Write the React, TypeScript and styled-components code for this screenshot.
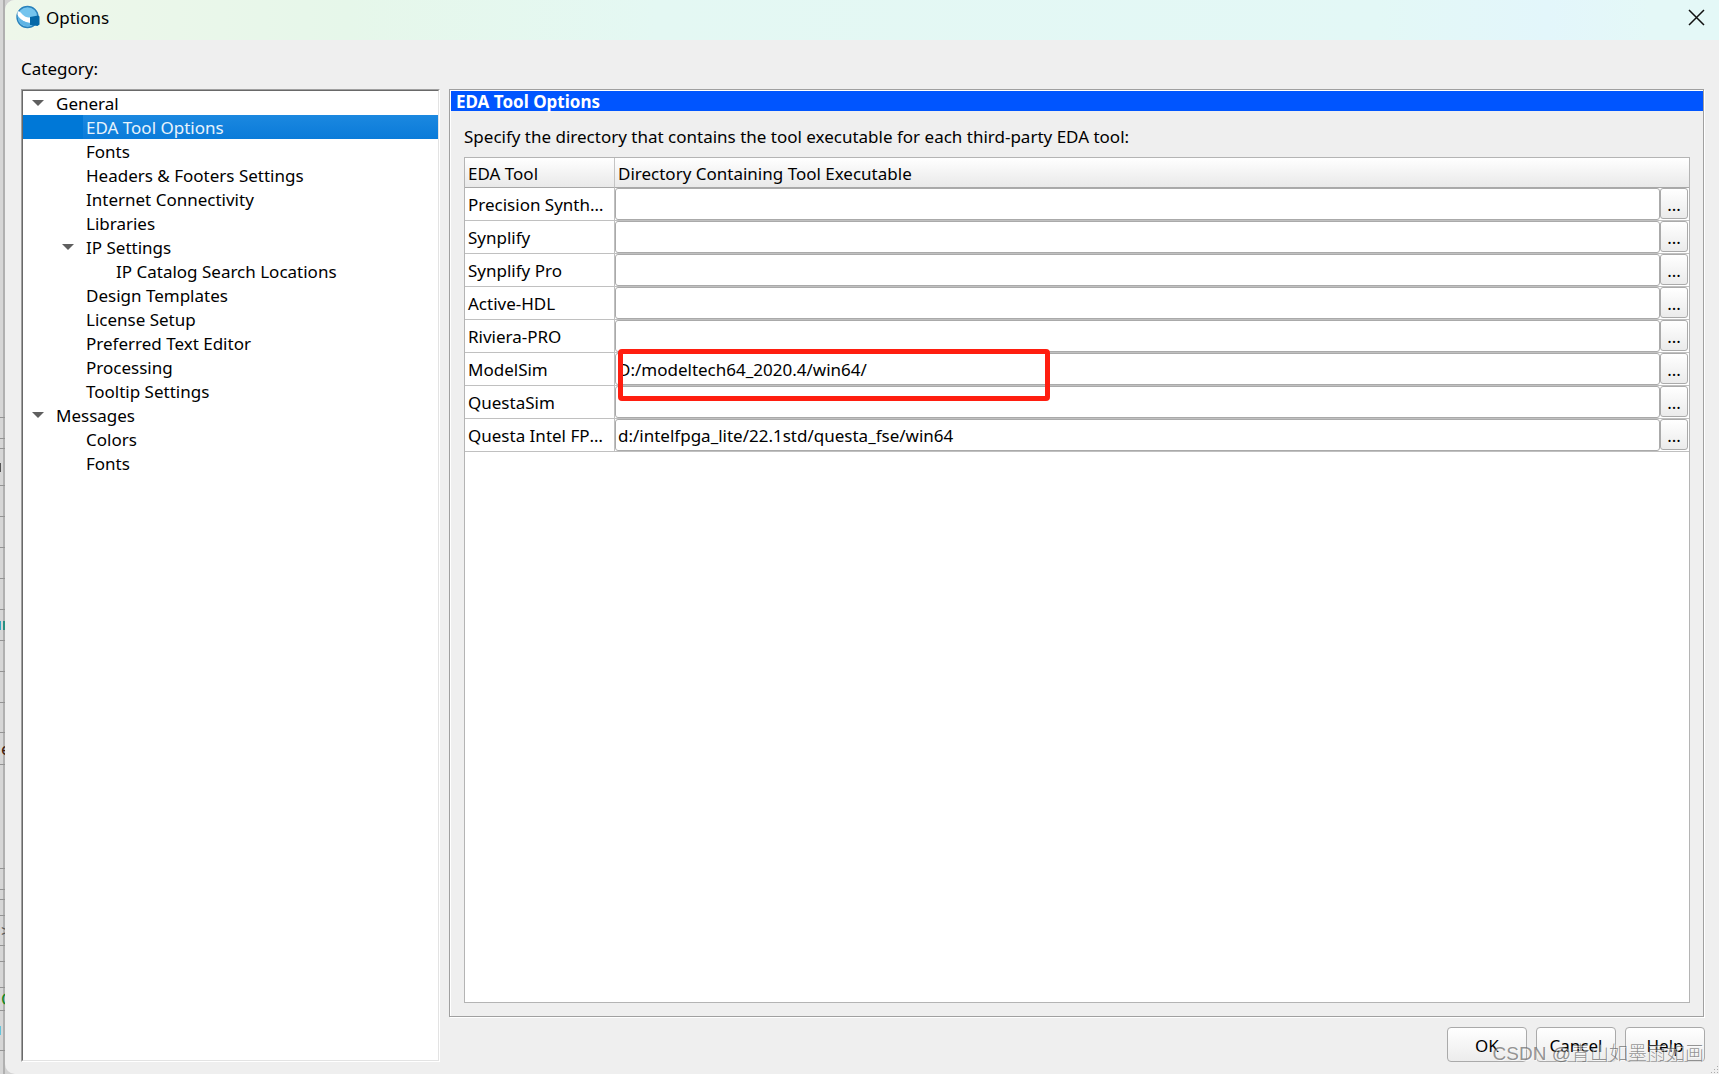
import React, { useState } from "react";
import styled, { createGlobalStyle, css } from "styled-components";

const GlobalStyle = createGlobalStyle`
  *, *::before, *::after { box-sizing: border-box; }
  body {
    margin: 0;
    background: #d2d2d2;
    color: #000;
    font: 17px/24px "Noto Sans", "Noto Sans CJK SC", sans-serif;
  }
  button, input { font: inherit; color: inherit; }
`;

const Screen = styled.div`
  position: relative;
  display: flex;
  min-height: 100vh;
  overflow: hidden;
`;

const Behind = styled.div`
  flex: none;
  width: 5px;
  height: 100vh;
  overflow: hidden;
  background: linear-gradient(90deg, #d6d6d6 0 60%, #b0b0b0 60%);
`;

const Slice = styled.div<{ $height: number; $tone?: string }>`
  display: flex;
  align-items: center;
  height: ${(p) => p.$height}px;
  overflow: hidden;
  border-bottom: 1px solid #949494;
  color: ${(p) => p.$tone ?? "#444"};
`;

const SliceText = styled.span`
  padding-left: 1px;
`;

const Chip = styled.span<{ $color: string; $width: number }>`
  width: ${(p) => p.$width}px;
  height: 9px;
  background: ${(p) => p.$color};
`;

const Dialog = styled.main`
  flex: 1;
  display: flex;
  flex-direction: column;
  min-width: 0;
  min-height: 100vh;
  background: #efefef;
  border-radius: 10px 0 0 10px;
  overflow: hidden;
`;

const TitleBar = styled.header`
  display: flex;
  align-items: center;
  height: 40px;
  padding: 0 14px 6px 11px;
  background: linear-gradient(90deg, #eef7ea 0%, #e6f7ea 20%, #e4f8f3 38%, #e3f8f6 80%, #e3f6fb 90%, #e4f8f7 96%);
`;

const Title = styled.h1`
  flex: 1;
  margin: 0;
  padding: 1px 0 0 6px;
  font-size: 17px;
  font-weight: 400;
`;

const CloseButton = styled.button`
  display: flex;
  padding: 0;
  border: 0;
  background: none;
`;

const Body = styled.div`
  flex: 1;
  display: grid;
  grid-template-columns: 419px minmax(0, 1fr);
  grid-template-rows: auto minmax(0, 1fr) auto;
  column-gap: 9px;
  padding: 17px 14px 12px 16px;
`;

const CategoryLabel = styled.h2`
  grid-column: 1 / -1;
  margin: 0 0 8px;
  font-size: 17px;
  font-weight: 400;
`;

const TreeFrame = styled.nav`
  grid-row: 2 / 4;
  border: 1px solid;
  border-color: #a0a0a0 #fff #fff #a0a0a0;
`;

const TreeInner = styled.div`
  height: 100%;
  background: #fff;
  border: 1px solid;
  border-color: #696969 #e3e3e3 #e3e3e3 #696969;
`;

const TreeList = styled.ul`
  margin: 0;
  padding: 0;
  list-style: none;
`;

const TreeItem = styled.button<{ $level: number; $selected: boolean }>`
  display: flex;
  align-items: stretch;
  width: 100%;
  height: 24px;
  padding: 0 0 0 ${(p) => p.$level * 30}px;
  border: 0;
  background: none;
  text-align: left;
  white-space: nowrap;
  ${(p) =>
    p.$selected &&
    css`
      background: #0078d7;
      color: #e8f3fc;
    `}
`;

const Branch = styled.span`
  display: flex;
  align-items: center;
  flex: none;
  width: 30px;
  padding-left: 9px;
`;

const TreeText = styled.span<{ $selected: boolean }>`
  flex: 1;
  padding: 1px 0 0 3px;
  line-height: 23px;
  padding-top: 1px;
  background: ${(p) => (p.$selected ? "linear-gradient(#1b88e0, #0a7bd9)" : "none")};
`;

const Panel = styled.section`
  display: flex;
  flex-direction: column;
  border: 1px solid #a0a0a0;
  box-shadow: 1px 1px 0 #fff, inset 1px 1px 0 #fff;
  padding: 1px 0 13px 1px;
  margin-right: 1px;
`;

const PanelTitle = styled.h2`
  margin: 0;
  padding: 1px 0 0 5px;
  background: #0055ff;
  color: #fff;
  font-size: 17px;
  line-height: 19px;
  font-weight: 700;
`;

const Description = styled.p`
  margin: 0;
  padding: 14px 13px 8px;
`;

const TableFrame = styled.div`
  flex: 1;
  margin: 0 13px;
  border: 1px solid #b4b4b4;
  background: #fff;
`;

const Table = styled.table`
  width: 100%;
  border-collapse: separate;
  border-spacing: 0;
  table-layout: fixed;
`;

const HeadCell = styled.th<{ $width?: number }>`
  width: ${(p) => (p.$width ? `${p.$width}px` : "auto")};
  height: 30px;
  padding: 2px 3px 0;
  border-right: 1px solid #c4c4c4;
  border-bottom: 1px solid #a8a8a8;
  background: linear-gradient(#fff, #e9e9e9);
  font-weight: 400;
  text-align: left;
  &:last-child { border-right: 0; }
`;

const NameCell = styled.th`
  height: 33px;
  padding: 2px 3px 0;
  border-right: 1px solid #c0c0c0;
  border-bottom: 1px solid #c0c0c0;
  font-weight: 400;
  text-align: left;
  overflow: hidden;
  text-overflow: ellipsis;
  white-space: nowrap;
`;

const PathCell = styled.td`
  position: relative;
  height: 33px;
  padding: 0;
  border-bottom: 1px solid #c0c0c0;
`;

const PathEditor = styled.div`
  display: flex;
  height: 32px;
`;

const PathInput = styled.input`
  flex: 1;
  min-width: 0;
  padding: 2px 2px 0;
  border: 1px solid #aaa;
  border-radius: 3px;
  background: #fff;
  outline: 0;
`;

const BrowseButton = styled.button`
  width: 28px;
  height: 31px;
  margin-right: 1px;
  padding: 2px 0 0;
  border: 1px solid #aaa;
  border-radius: 3px;
  background: linear-gradient(#fff, #ebebeb);
  line-height: 20px;
`;

const Highlight = styled.span`
  position: absolute;
  top: -4px;
  left: 3px;
  width: 432px;
  height: 52px;
  border: 5px solid #ff1e10;
  border-radius: 4px;
  pointer-events: none;
  z-index: 1;
`;

const Actions = styled.footer`
  display: flex;
  justify-content: flex-end;
  gap: 9px;
  padding-top: 10px;
`;

const ActionButton = styled.button`
  width: 80px;
  height: 35px;
  padding: 3px 0 0;
  border: 1px solid #aaa;
  border-radius: 4px;
  background: linear-gradient(#fff, #ececec);
`;

const Watermark = styled.div`
  position: absolute;
  right: 15px;
  bottom: 7px;
  color: rgba(90, 90, 90, 0.65);
  font: 300 19px/26px "Liberation Sans", "Noto Sans CJK SC", sans-serif;
  text-shadow: 1px 1px 0 rgba(255, 255, 255, 0.6);
  white-space: nowrap;
  pointer-events: none;
`;

const Grip = styled.svg`
  position: absolute;
  right: 0;
  bottom: 0;
`;

type Slab = { height: number; text?: string; chip?: string; chipWidth?: number; tone?: string };

const slabs: Slab[] = [
  { height: 418 },
  { height: 21 },
  { height: 10 },
  { height: 37, chip: "#555", chipWidth: 1 },
  { height: 31 },
  { height: 31 },
  { height: 31 },
  { height: 31 },
  { height: 31, chip: "linear-gradient(90deg, #2fa9c4 0 1px, transparent 1px 3px, #2a8f80 3px)", chipWidth: 5 },
  { height: 31 },
  { height: 31 },
  { height: 30 },
  { height: 32, text: "e", tone: "#402010" },
  { height: 104 },
  { height: 21 },
  { height: 10 },
  { height: 16 },
  { height: 30, text: ">", tone: "#555" },
  { height: 16 },
  { height: 26 },
  { height: 23, text: "C", tone: "#118822" },
  { height: 40, chip: "#62c4dc", chipWidth: 1 },
];

const categories = [
  { id: "general", label: "General", level: 0, open: true },
  { id: "eda", label: "EDA Tool Options", level: 1 },
  { id: "fonts", label: "Fonts", level: 1 },
  { id: "headers", label: "Headers & Footers Settings", level: 1 },
  { id: "internet", label: "Internet Connectivity", level: 1 },
  { id: "libraries", label: "Libraries", level: 1 },
  { id: "ip", label: "IP Settings", level: 1, open: true },
  { id: "ip-catalog", label: "IP Catalog Search Locations", level: 2 },
  { id: "templates", label: "Design Templates", level: 1 },
  { id: "license", label: "License Setup", level: 1 },
  { id: "editor", label: "Preferred Text Editor", level: 1 },
  { id: "processing", label: "Processing", level: 1 },
  { id: "tooltip", label: "Tooltip Settings", level: 1 },
  { id: "messages", label: "Messages", level: 0, open: true },
  { id: "colors", label: "Colors", level: 1 },
  { id: "message-fonts", label: "Fonts", level: 1 },
];

const tools = [
  { name: "Precision Synthesis", path: "" },
  { name: "Synplify", path: "" },
  { name: "Synplify Pro", path: "" },
  { name: "Active-HDL", path: "" },
  { name: "Riviera-PRO", path: "" },
  { name: "ModelSim", path: "D:/modeltech64_2020.4/win64/", marked: true },
  { name: "QuestaSim", path: "" },
  { name: "Questa Intel FPGA", path: "d:/intelfpga_lite/22.1std/questa_fse/win64" },
];

const AppIcon = () => (
  <svg width="24" height="24" viewBox="0 0 24 24" aria-hidden="true">
    <circle cx="11.5" cy="12" r="10.5" fill="#74c4ee" stroke="#2a82bc" strokeWidth="1.4" />
    <path d="M1.500 6.500C4 5.500 5 9 9 11.500C11 12.700 13 12.500 15 12.500V18C10 18 4 15 1.500 10Z" fill="#fff" />
    <path d="M1.500 11C5 15.500 10 17.500 14 18V21C8 22.500 2.500 18 1.500 11Z" fill="#5fb4e4" />
    <path d="M14 12L22 10.500L23.500 11.500V19.500L21.500 21L14 20Z" fill="#0568a8" />
  </svg>
);

const Arrow = () => (
  <svg width="12" height="7" viewBox="0 0 12 7" aria-hidden="true">
    <path d="M0 0H12L6 6Z" fill="#5f5f5f" />
  </svg>
);

export default function App() {
  const [selected, setSelected] = useState("eda");

  return (
    <Screen>
      <GlobalStyle />
      <Behind aria-hidden="true">
        {slabs.map((slab, i) => (
          <Slice key={i} $height={slab.height} $tone={slab.tone}>
            {slab.chip && <Chip $color={slab.chip} $width={slab.chipWidth ?? 1} />}
            {slab.text && <SliceText>{slab.text}</SliceText>}
          </Slice>
        ))}
      </Behind>
      <Dialog>
        <TitleBar>
          <AppIcon />
          <Title>Options</Title>
          <CloseButton aria-label="Close">
            <svg width="17" height="17" viewBox="0 0 17 17" aria-hidden="true">
              <path d="M1 1L16 16M16 1L1 16" stroke="#111" strokeWidth="1.5" />
            </svg>
          </CloseButton>
        </TitleBar>
        <Body>
          <CategoryLabel>Category:</CategoryLabel>
          <TreeFrame aria-label="Category">
            <TreeInner>
              <TreeList>
                {categories.map((item) => (
                  <li key={item.id}>
                    <TreeItem
                      $level={item.level}
                      $selected={item.id === selected}
                      onClick={() => setSelected(item.id)}
                    >
                      <Branch>{item.open && <Arrow />}</Branch>
                      <TreeText $selected={item.id === selected}>{item.label}</TreeText>
                    </TreeItem>
                  </li>
                ))}
              </TreeList>
            </TreeInner>
          </TreeFrame>
          <Panel>
            <PanelTitle>EDA Tool Options</PanelTitle>
            <Description>
              Specify the directory that contains the tool executable for each third-party EDA tool:
            </Description>
            <TableFrame>
              <Table>
                <thead>
                  <tr>
                    <HeadCell $width={150} scope="col">EDA Tool</HeadCell>
                    <HeadCell scope="col">Directory Containing Tool Executable</HeadCell>
                  </tr>
                </thead>
                <tbody>
                  {tools.map((tool) => (
                    <tr key={tool.name}>
                      <NameCell scope="row">{tool.name}</NameCell>
                      <PathCell>
                        <PathEditor>
                          <PathInput aria-label={`${tool.name} directory`} defaultValue={tool.path} />
                          <BrowseButton aria-label={`Browse for ${tool.name}`}>...</BrowseButton>
                        </PathEditor>
                        {tool.marked && <Highlight />}
                      </PathCell>
                    </tr>
                  ))}
                </tbody>
              </Table>
            </TableFrame>
          </Panel>
          <Actions>
            <ActionButton>OK</ActionButton>
            <ActionButton>Cancel</ActionButton>
            <ActionButton>Help</ActionButton>
          </Actions>
        </Body>
      </Dialog>
      <Watermark>CSDN @青山如墨雨如画</Watermark>
      <Grip width="8" height="9" viewBox="0 0 8 9" aria-hidden="true">
        <path d="M6 1h1v1h-1zM3 4h1v1h-1zM6 4h1v1h-1zM0 7h1v1h-1zM3 7h1v1h-1zM6 7h1v1h-1z" fill="#aaa" />
      </Grip>
    </Screen>
  );
}
